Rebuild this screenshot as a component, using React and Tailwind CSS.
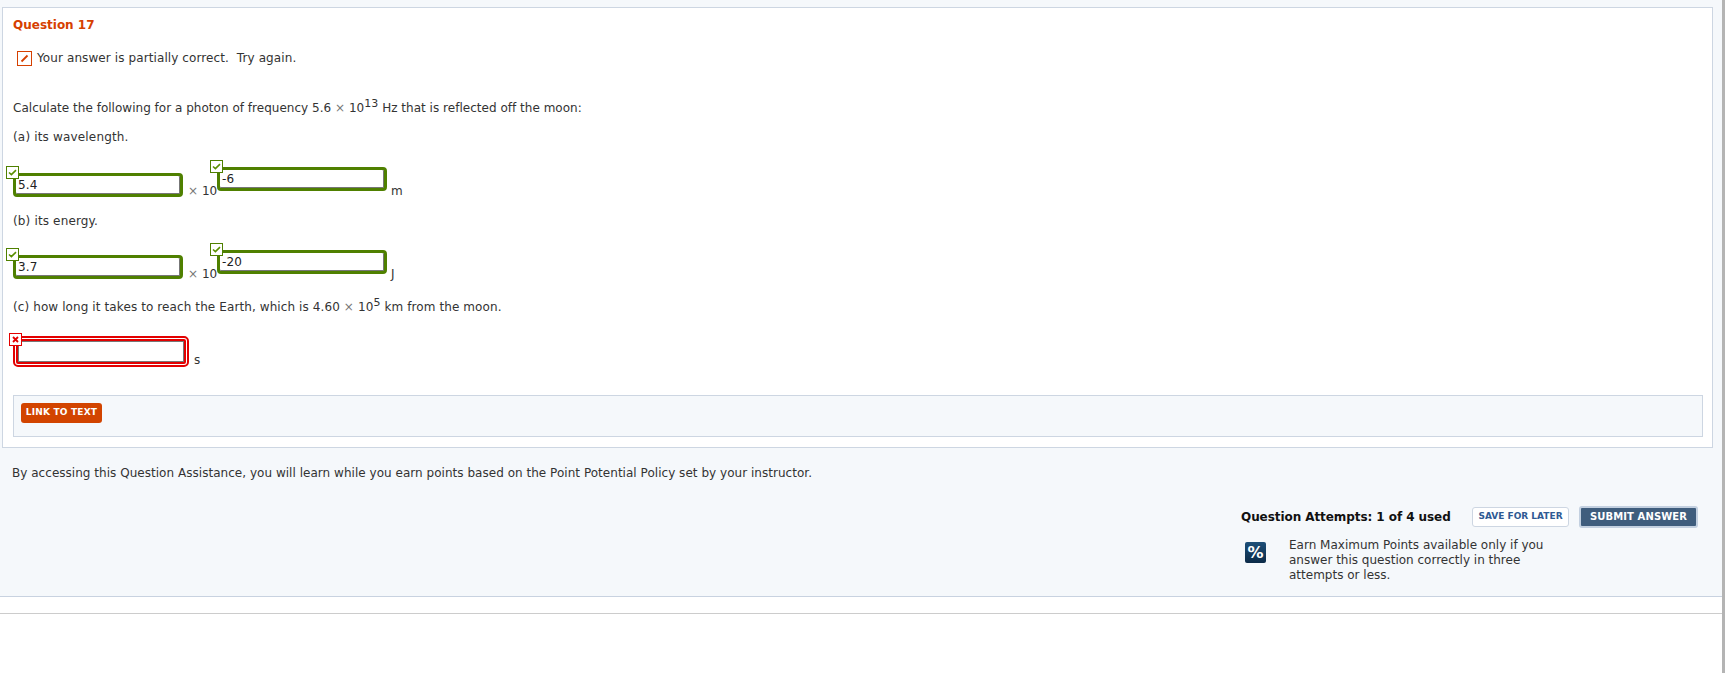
import React from "react";

const Check = () => (
  <span className="absolute -left-[10px] -top-[10px] flex h-[13px] w-[13px] items-center justify-center border border-[#4f8000] bg-white">
    <svg width="9" height="7" viewBox="0 0 9 7" fill="none"><path d="M1 3.5 L3.4 5.6 L8 1.2" stroke="#5a8f00" strokeWidth="1.6" /></svg>
  </span>
);

const Cross = () => (
  <span className="absolute -left-[6px] -top-[5px] flex h-[13px] w-[13px] items-center justify-center border border-[#e30000] bg-white">
    <svg width="7" height="7" viewBox="0 0 7 7" fill="none"><path d="M1 1 L6 6 M6 1 L1 6" stroke="#e30000" strokeWidth="1.8" /></svg>
  </span>
);

const GreenInput = ({ value }) => (
  <span className="relative block h-[24px] w-[170px] rounded-[4px] border-[3px] border-[#4f8000] bg-white pl-[2px] text-[12px] leading-[18px] tracking-[0.2px] text-[#222] shadow-[inset_0_-1px_0_#777,inset_-1px_0_0_#777]">
    <Check />
    {value}
  </span>
);

const AnswerRow = ({ a, b, unit, lift }) => (
  <div className="flex h-[32px] items-start">
    <div className={lift}><GreenInput value={a} /></div>
    <span className="ml-[5px] mt-[17px] w-[29px] whitespace-nowrap text-[12px] leading-[15px]"><span className="text-[#777]">×</span> 10</span>
    <GreenInput value={b} />
    <span className="ml-[4px] mt-[17px] text-[12px] leading-[15px]">{unit}</span>
  </div>
);

export default function App() {
  return (
    <div className="flex min-h-[673px] bg-white font-['DejaVu_Sans','Liberation_Sans',sans-serif] text-[12px] text-[#333]">
      <div className="w-[1722px] shrink-0">
        <div className="h-[597px] border-b border-[#c8d2e0] bg-[#f5f8fb] pl-[2px] pr-[9px] pt-[7px]">
          <div className="h-[441px] border border-[#cdd6e2] bg-white pl-[10px] pr-[9px]">
            <h2 className="pt-[9px] text-[12px] font-bold leading-[16px] text-[#d64000]">Question 17</h2>
            <div className="mt-[18px] flex items-center pl-[4px] leading-[15px]">
              <span className="flex h-[15px] w-[15px] items-center justify-center border border-[#d64000]">
                <svg width="9" height="9" viewBox="0 0 9 9" fill="none"><path d="M1.5 7.5 L7.5 1.5" stroke="#d64000" strokeWidth="1.8" /></svg>
              </span>
              <span className="ml-[5px] whitespace-pre tracking-[0.1px]">Your answer is partially correct.  Try again.</span>
            </div>
            <p className="mt-[35px] leading-[15px] tracking-[0.02px]">Calculate the following for a photon of frequency 5.6 <span className="text-[#777]">×</span> 10<sup className="text-[11px]">13</sup> Hz that is reflected off the moon:</p>
            <p className="mt-[14px] leading-[15px] tracking-[0.17px]">(a) its wavelength.</p>
            <div className="mt-[22px]"><AnswerRow a="5.4" b="-6" unit="m" lift="mt-[6px]" /></div>
            <p className="mt-[15px] leading-[15px] tracking-[0.15px]">(b) its energy.</p>
            <div className="mt-[21px]"><AnswerRow a="3.7" b="-20" unit="J" lift="mt-[5px]" /></div>
            <p className="mt-[18px] leading-[15px] tracking-[0.1px]">(c) how long it takes to reach the Earth, which is 4.60 <span className="text-[#777]">×</span> 10<sup className="text-[11px]">5</sup> km from the moon.</p>
            <div className="mt-[21px] flex items-start">
              <span className="relative block h-[31px] w-[176px] rounded-[5px] border-2 border-[#e30000] bg-white p-[1px]">
                <Cross />
                <span className="block h-full w-full rounded-[2px] border-2 border-[#e30000] shadow-[inset_1px_1px_0_#777,inset_-1px_-1px_0_#777]" />
              </span>
              <span className="ml-[5px] mt-[17px] leading-[15px]">s</span>
            </div>
            <div className="mt-[27px] h-[42px] border border-[#cdd6e2] bg-[#f5f8fb] pl-[7px] pt-[6px]">
              <span className="inline-block h-[20px] w-[81px] rounded-[3px] bg-[#d24400] text-center text-[9px] font-bold leading-[19px] tracking-[0.2px] text-white">LINK TO TEXT</span>
            </div>
          </div>
          <p className="ml-[10px] mt-[18px] leading-[15px] tracking-[0.03px]">By accessing this Question Assistance, you will learn while you earn points based on the Point Potential Policy set by your instructor.</p>
          <div className="ml-auto mr-[14px] mt-[25px] w-[458px]">
            <div className="flex items-center">
              <span className="w-[231px] whitespace-nowrap font-bold leading-[20px] tracking-[-0.07px] text-[#111]">Question Attempts: 1 of 4 used</span>
              <span className="h-[20px] w-[97px] rounded-[3px] border border-[#cdd6e2] bg-white text-center text-[9px] font-bold leading-[17px] text-[#2f5a93]">SAVE FOR LATER</span>
              <span className="ml-[10px] h-[22px] w-[119px] rounded-[3px] border-2 border-[#c3d0e0] bg-[#3f5d7d] text-center text-[10px] font-bold leading-[18px] tracking-[0.1px] text-white">SUBMIT ANSWER</span>
            </div>
            <div className="mt-[10px] flex items-start">
              <span className="ml-[4px] mt-[4px] flex h-[21px] w-[21px] items-center justify-center rounded-[2px] bg-gradient-to-b from-[#1d4f78] to-[#0c2b48] text-[16px] font-bold leading-none text-white">%</span>
              <p className="ml-[23px] w-[280px] leading-[15px]">Earn Maximum Points available only if you answer this question correctly in three attempts or less.</p>
            </div>
          </div>
        </div>
        <div className="mt-[16px] h-[1px] bg-[#cccccc]" />
      </div>
      <div className="w-[3px] shrink-0 bg-[#b4b4b4]" />
    </div>
  );
}
